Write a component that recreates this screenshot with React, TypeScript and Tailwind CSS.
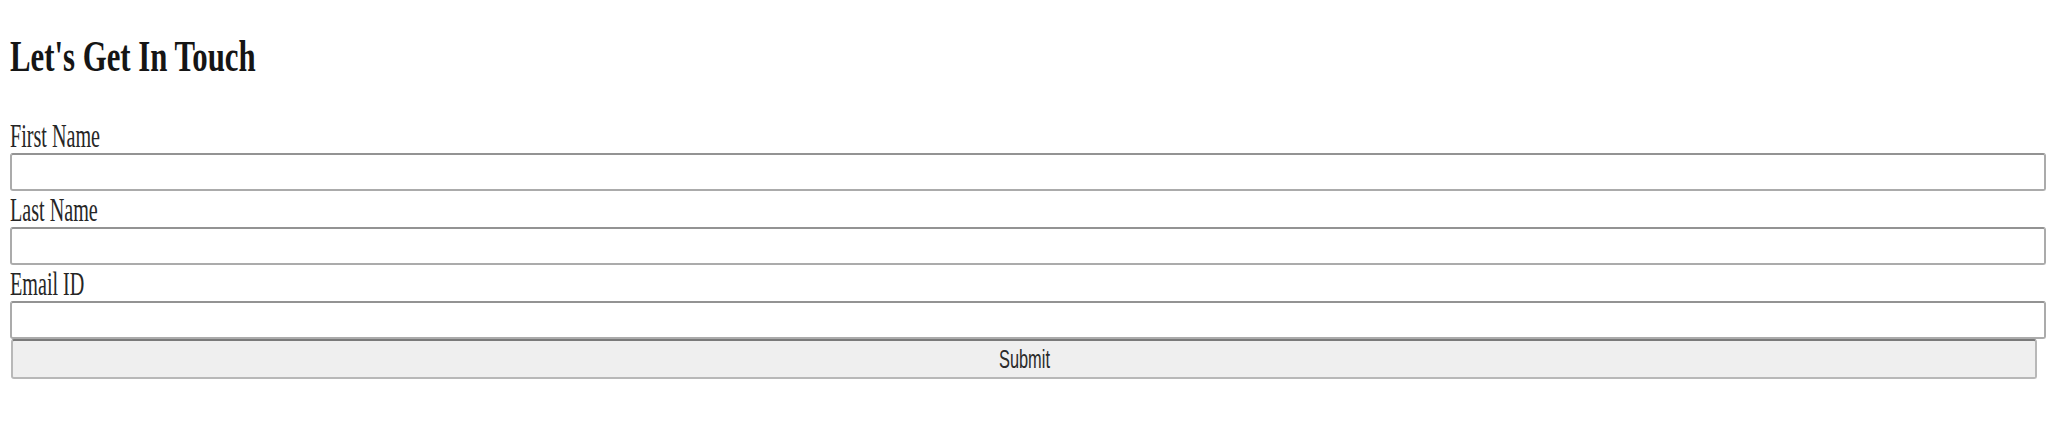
export default function App() {
  const fields = ["First Name", "Last Name", "Email ID"];

  return (
    <div className="w-[2048px] h-[426px] bg-white pl-[10px] pt-[33px] font-['Liberation_Serif',serif] text-[#1a1a1a]">
      <h2 className="h-[48px] mb-[36px] text-[44px] leading-[48px] font-bold text-[#151515] whitespace-nowrap">
        <span className="inline-block origin-left scale-x-[0.70]">Let's Get In Touch</span>
      </h2>

      <form className="flex flex-col w-[2036px]" onSubmit={(e) => e.preventDefault()}>
        {fields.map((label) => (
          <div key={label} className="flex flex-col">
            <label className="h-[36px] pt-[2px] text-[33px] leading-[34px] whitespace-nowrap text-[#262626]">
              <span className="inline-block origin-left scale-x-[0.61]">{label}</span>
            </label>
            <input
              type="text"
              className="h-[38px] w-full rounded-[3px] border-2 border-[#ababab] border-t-[#939393] bg-white outline-none"
            />
          </div>
        ))}
        <button
          type="submit"
          className="ml-[1px] h-[40px] w-[2026px] rounded-[3px] border-2 border-[#b8b8b8] border-t-[#7a7a7a] bg-[#efefef] text-[26px] leading-[34px] text-[#2a2a2a] font-['Liberation_Sans',sans-serif]"
        >
          <span className="inline-block scale-x-[0.63]">Submit</span>
        </button>
      </form>
    </div>
  );
}
